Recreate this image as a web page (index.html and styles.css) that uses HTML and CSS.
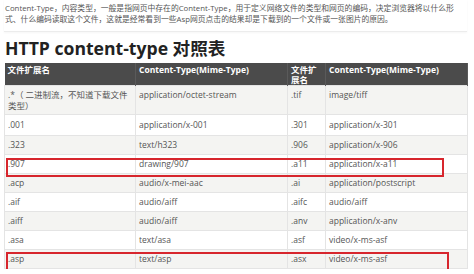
FILE: index.html
```html
<!DOCTYPE html>
<html lang="zh-CN">
<head>
<meta charset="utf-8">
<title>HTTP content-type 对照表</title>
<link rel="stylesheet" href="styles.css">
</head>
<body>
<div class="page">
  <p class="intro">Content-Type，内容类型，一般是指网页中存在的Content-Type，用于定义网络文件的类型和网页的编码，决定浏览器将以什么形式、什么编码读取这个文件，这就是经常看到一些Asp网页点击的结果却是下载到的一个文件或一张图片的原因。</p>
  <h2 class="ct-title">HTTP content-type 对照表</h2>
  <div class="ct-wrap">
    <table class="ct-table">
      <colgroup>
        <col class="c-ext"><col class="c-type"><col class="c-ext2"><col class="c-type2">
      </colgroup>
      <thead>
        <tr><th>文件扩展名</th><th>Content-Type(Mime-Type)</th><th>文件扩展名</th><th>Content-Type(Mime-Type)</th></tr>
      </thead>
      <tbody>
        <tr class="tall"><td>.*（ 二进制流，不知道下载文件类型）</td><td>application/octet-stream</td><td>.tif</td><td>image/tiff</td></tr>
        <tr class="r2"><td>.001</td><td>application/x-001</td><td>.301</td><td>application/x-301</td></tr>
        <tr><td>.323</td><td>text/h323</td><td>.906</td><td>application/x-906</td></tr>
        <tr><td>.907</td><td>drawing/907</td><td>.a11</td><td>application/x-a11</td></tr>
        <tr><td>.acp</td><td>audio/x-mei-aac</td><td>.ai</td><td>application/postscript</td></tr>
        <tr><td>.aif</td><td>audio/aiff</td><td>.aifc</td><td>audio/aiff</td></tr>
        <tr><td>.aiff</td><td>audio/aiff</td><td>.anv</td><td>application/x-anv</td></tr>
        <tr><td>.asa</td><td>text/asa</td><td>.asf</td><td>video/x-ms-asf</td></tr>
        <tr><td>.asp</td><td>text/asp</td><td>.asx</td><td>video/x-ms-asf</td></tr>
      </tbody>
    </table>
    <div class="mark mark-907"></div>
    <div class="mark mark-asp"></div>
  </div>
</div>
</body>
</html>
```

FILE: styles.css
```css
*{box-sizing:border-box;}
html,body{margin:0;padding:0;background:#fff;}
body{
  font-family:'Open Sans','Noto Sans CJK SC',sans-serif;
  color:#444;
}
.page{padding:0 7px 0 4px;}

.intro{
  margin:0;
  padding:3px 8px 7px 1px;
  font-size:7.8px;
  line-height:10.5px;
  color:#555;
  border-bottom:1px solid #ececec;
  box-shadow:0 1px 2px rgba(0,0,0,.04);
}
.ct-title{
  margin:5px 0 4px 1px;
  font-size:17.6px;
  line-height:22px;
  font-weight:700;
  color:#222;
}

/* ---- table ---- */
.ct-wrap{position:relative;}
.ct-table{
  width:463px;
  table-layout:fixed;
  border-collapse:collapse;
  font-size:8.5px;
  line-height:10.5px;
}
.c-ext{width:131px;} .c-type{width:152px;} .c-ext2{width:38px;} .c-type2{width:142px;}
.ct-table th{
  background:#4b4b4b;
  color:#fff;
  font-weight:700;
  text-align:left;
  vertical-align:top;
  padding:2px 2px 1px 3px;
  height:22px;
  line-height:9.5px;
  border-right:1px solid #5a5a5a;
}
.ct-table td{
  vertical-align:top;
  padding:4px 3px 0 3px;
  height:19px;
  border:1px solid #e4e4e4;
  color:#555;
}
.ct-table td:first-child{padding-right:0;}
.ct-table tbody tr:nth-child(odd) td{background:#f4f4f2;}
.ct-table tr.tall td{height:29px;}
.ct-table tr.r2 td{height:21px;padding-top:5px;}

/* red highlight frames over rows */
.mark{position:absolute;border:2px solid #d7262d;}
.mark-907{left:2px;width:438px;top:95px;height:19px;}
.mark-asp{left:2px;width:443px;top:189px;height:19px;}
```
